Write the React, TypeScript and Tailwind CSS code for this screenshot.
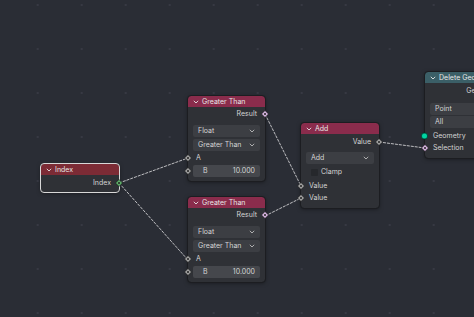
import React from "react";

type SockKind = "float" | "bool" | "int" | "geo";

const SOCK_COLORS: Record<SockKind, string> = {
  float: "#a1a1a1",
  bool: "#d7b4e0",
  int: "#5fae6a",
  geo: "#00d6a3",
};

function Socket({ kind, side }: { kind: SockKind; side: "left" | "right" }) {
  const pos = side === "left" ? "left-[-4px]" : "right-[-4px]";
  if (kind === "geo") {
    return (
      <span className={`absolute ${pos} top-1/2 -translate-y-1/2 w-[7px] h-[7px] rounded-full border border-black/60 bg-[#00d6a3]`} />
    );
  }
  return (
    <svg className={`absolute ${pos} top-1/2 -translate-y-1/2`} width="8" height="8" viewBox="0 0 8 8">
      <path d="M4 0.5 L7.5 4 L4 7.5 L0.5 4 Z" fill={SOCK_COLORS[kind]} stroke="#111" strokeWidth="0.6" />
      <circle cx="4" cy="4" r="1" fill="#222" />
    </svg>
  );
}

function Chevron({ className = "" }: { className?: string }) {
  return (
    <svg className={className} width="6" height="4" viewBox="0 0 6 4">
      <path d="M0.8 0.8 L3 3 L5.2 0.8" fill="none" stroke="currentColor" strokeWidth="0.9" />
    </svg>
  );
}

function Header({ title, color }: { title: string; color: string }) {
  return (
    <div className={`h-[11px] flex items-center gap-[3px] pl-[5px] rounded-t-[3px] text-[#e6e6e6] ${color}`}>
      <Chevron />
      <span className="leading-none whitespace-nowrap">{title}</span>
    </div>
  );
}

function OutRow({ label, kind }: { label: string; kind: SockKind }) {
  return (
    <div className="relative h-[12px] flex items-center justify-end pr-[8px] whitespace-nowrap">
      {label}
      <Socket kind={kind} side="right" />
    </div>
  );
}

function InRow({ label, kind }: { label: string; kind: SockKind }) {
  return (
    <div className="relative h-[12px] flex items-center pl-[8px] whitespace-nowrap">
      {label}
      <Socket kind={kind} side="left" />
    </div>
  );
}

function Dropdown({ label }: { label: string }) {
  return (
    <div className="mx-[5px] h-[12px] flex items-center justify-between px-[5px] rounded-[2px] bg-[#3c3e43] whitespace-nowrap">
      <span>{label}</span>
      <Chevron className="text-[#bbb]" />
    </div>
  );
}

function GreaterThan() {
  return (
    <>
      <Header title="Greater Than" color="bg-[#8a2c4c]" />
      <div className="pt-[1px] pb-[4px]">
        <OutRow label="Result" kind="bool" />
        <div className="mt-[5px] flex flex-col gap-[2px]">
          <Dropdown label="Float" />
          <Dropdown label="Greater Than" />
        </div>
        <div className="mt-[1px]">
          <InRow label="A" kind="float" />
        </div>
        <div className="relative mt-[1px]">
          <div className="mx-[5px] h-[12px] flex items-center justify-between px-[10px] pr-[5px] rounded-[2px] bg-[#45474c]">
            <span>B</span>
            <span>10.000</span>
          </div>
          <Socket kind="float" side="left" />
        </div>
      </div>
    </>
  );
}

function Node({ x, y, w, selected, children }: { x: number; y: number; w: number; selected?: boolean; children: React.ReactNode }) {
  return (
    <div
      className={`absolute rounded-[3px] bg-[#2f3136] shadow-[0_1px_4px_rgba(0,0,0,0.5)] ${selected ? "outline outline-1 outline-[#d8d8d8]" : "outline outline-1 outline-[#1c1d21]"}`}
      style={{ left: x, top: y, width: w }}
    >
      {children}
    </div>
  );
}

export default function App() {
  const links = [
    [119, 183, 188, 158],
    [119, 183, 188, 260],
    [265, 114, 301, 186],
    [265, 216, 301, 198],
    [379, 142, 425, 148],
  ];
  return (
    <div className="relative w-[474px] h-[317px] overflow-hidden bg-[#2a2d35] text-[7px] text-[#d4d4d4] font-['Inter','DejaVu_Sans',sans-serif]">
      <svg className="absolute inset-0" width="474" height="317">
        <defs>
          <pattern id="dots" x="15.7" y="-17" width="44" height="44" patternUnits="userSpaceOnUse">
            <rect x="21.2" y="21.2" width="1.6" height="1.6" fill="#3d404a" />
          </pattern>
        </defs>
        <rect width="474" height="317" fill="url(#dots)" />
        {links.map(([x1, y1, x2, y2], i) => (
          <line key={i} x1={x1} y1={y1} x2={x2} y2={y2} stroke="#bfbfc2" strokeWidth="1" strokeDasharray="3 1" />
        ))}
      </svg>

      {/* Index */}
      <Node x={41} y={164} w={78} selected>
        <Header title="Index" color="bg-[#7c2b35]" />
        <div className="pt-[2px] pb-[3px]">
          <OutRow label="Index" kind="int" />
        </div>
      </Node>

      <Node x={188} y={96} w={77}>
        <GreaterThan />
      </Node>

      <Node x={188} y={197} w={77}>
        <GreaterThan />
      </Node>

      {/* Add */}
      <Node x={301} y={123} w={78}>
        <Header title="Add" color="bg-[#8a2c4c]" />
        <div className="pt-[2px] pb-[4px]">
          <OutRow label="Value" kind="float" />
          <div className="mt-[4px]">
            <Dropdown label="Add" />
          </div>
          <div className="h-[12px] mt-[2px] flex items-center gap-[3px] pl-[10px]">
            <span className="w-[7px] h-[7px] rounded-[1px] bg-[#26282c]" />
            <span>Clamp</span>
          </div>
          <div className="mt-[2px]">
            <InRow label="Value" kind="float" />
            <InRow label="Value" kind="float" />
          </div>
        </div>
      </Node>

      {/* Delete Geometry */}
      <Node x={425} y={72} w={82}>
        <Header title="Delete Geometry" color="bg-[#3b5f67]" />
        <div className="pt-[2px] pb-[4px]">
          <OutRow label="Geometry" kind="geo" />
          <div className="mt-[6px] flex flex-col gap-[1px]">
            <Dropdown label="Point" />
            <Dropdown label="All" />
          </div>
          <div className="mt-[2px]">
            <InRow label="Geometry" kind="geo" />
            <InRow label="Selection" kind="bool" />
          </div>
        </div>
      </Node>
    </div>
  );
}
